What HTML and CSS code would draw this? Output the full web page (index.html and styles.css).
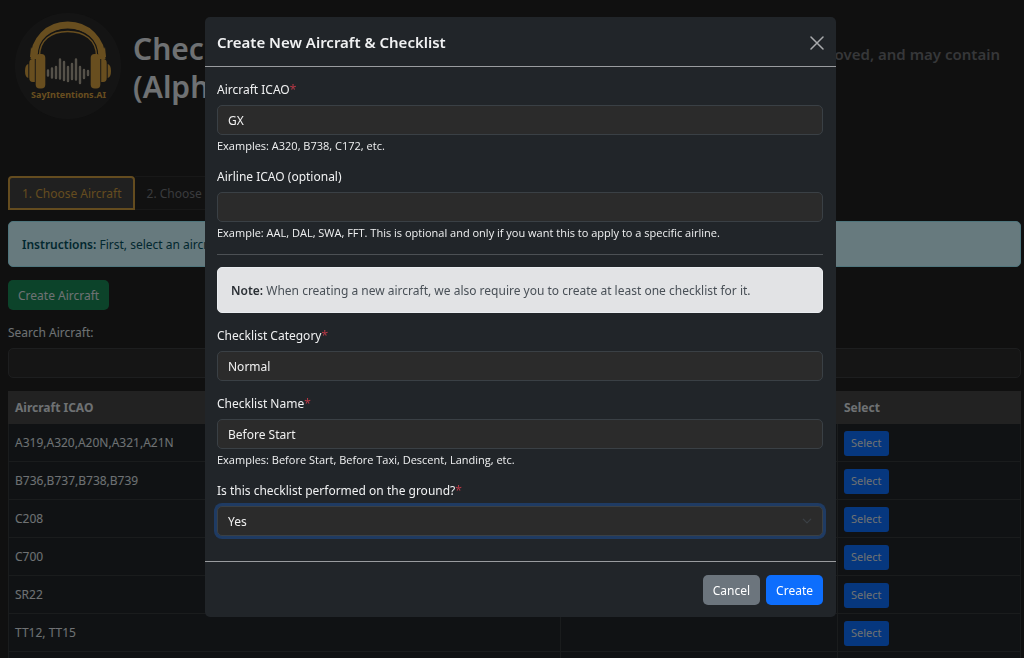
FILE: index.html
```html
<!DOCTYPE html>
<html lang="en">
<head>
<meta charset="utf-8">
<title>Checklist Editor</title>
<link rel="stylesheet" href="styles.css">
</head>
<body>
<div class="page">
  <header class="masthead">
    <svg class="logo" viewBox="0 0 106 106" role="img" aria-label="SayIntentions.AI">
      <circle cx="53" cy="53" r="53" fill="#292929"/>
      <path d="M19 46C19 27 33 12 52.700 12S87 27 87 46" fill="none" stroke="#d09c3e" stroke-width="7"/>
      <path d="M24.500 43C24.500 27 36 17.800 52.700 17.800S81.500 27 81.500 43" fill="none" stroke="#292929" stroke-width="3.500"/>
      <path d="M24.500 43C24.500 27 36 18.500 52.700 18.500S81.500 27 81.500 43" fill="none" stroke="#d09c3e" stroke-width="1.500"/>
      <g fill="#d09c3e">
        <path d="M16 34l-1 10h6zM90 34l1 10h-6z"/>
        <rect x="20.700" y="41" width="9.600" height="34.500" rx="4"/>
        <rect x="75.700" y="41" width="9.600" height="34.500" rx="4"/>
        <path d="M19.800 46h-2q-3.500 0-3.500 4v15q0 4 3.500 4h2zM86.200 46h2q3.500 0 3.500 4v15q0 4-3.500 4h-2z"/>
        <path d="M13.300 51q-3.300 1-3.300 7t3.300 7zM92.700 51q3.300 1 3.300 7t-3.300 7z"/>
      </g>
      <path d="M33 57.500v5M37 55.500v9M41 54v11M45 46.500v19M49 49v18M53 54v14M57 51v15M61 46.500v20M65 54v16M69 57v8M73 58v4" stroke="#aaa292" stroke-width="2.400" stroke-linecap="round"/>
      <text x="53.500" y="85" text-anchor="middle" class="logo-text">SayIntentions.AI</text>
    </svg>
    <h1 class="page-title">Checklist Editor<br>(Alpha)</h1>
    <p class="disclaimer">Checklists are unofficial, are not approved, and may contain<br>errors.</p>
  </header>

  <nav class="steps">
    <button class="step step-active" type="button">1. Choose Aircraft</button>
    <button class="step" type="button">2. Choose Checklist</button>
  </nav>

  <div class="alert alert-info"><strong>Instructions:</strong> First, select an aircraft from the list below.</div>

  <button class="btn btn-success" type="button">Create Aircraft</button>

  <div class="search">
    <label class="label" for="search">Search Aircraft:</label>
    <input class="control search-input" id="search" type="text">
  </div>

  <table class="aircraft">
    <colgroup><col class="col-icao"><col class="col-airline"><col class="col-select"></colgroup>
    <thead><tr><th>Aircraft ICAO</th><th>Airline</th><th>Select</th></tr></thead>
    <tbody>
      <tr><td>A319,A320,A20N,A321,A21N</td><td></td><td><button class="btn-select" type="button">Select</button></td></tr>
      <tr><td>B736,B737,B738,B739</td><td></td><td><button class="btn-select" type="button">Select</button></td></tr>
      <tr><td>C208</td><td></td><td><button class="btn-select" type="button">Select</button></td></tr>
      <tr><td>C700</td><td></td><td><button class="btn-select" type="button">Select</button></td></tr>
      <tr><td>SR22</td><td></td><td><button class="btn-select" type="button">Select</button></td></tr>
      <tr><td>TT12, TT15</td><td></td><td><button class="btn-select" type="button">Select</button></td></tr>
      <tr><td></td><td></td><td></td></tr>
    </tbody>
  </table>
</div>

<div class="backdrop">
  <form class="modal" role="dialog" aria-labelledby="modal-title">
    <div class="modal-header">
      <h2 class="modal-title" id="modal-title">Create New Aircraft &amp; Checklist</h2>
      <button class="close" type="button" aria-label="Close">
        <svg viewBox="0 0 14 14" width="14" height="14"><path d="M1 1l12 12M13 1L1 13" stroke="#a9abad" stroke-width="1.500" stroke-linecap="round"/></svg>
      </button>
    </div>
    <div class="modal-body">
      <div class="field">
        <label class="label" for="icao">Aircraft ICAO<span class="required">*</span></label>
        <input class="control" id="icao" type="text" value="GX">
        <small class="help">Examples: A320, B738, C172, etc.</small>
      </div>
      <div class="field">
        <label class="label" for="airline">Airline ICAO (optional)</label>
        <input class="control" id="airline" type="text">
        <small class="help">Example: AAL, DAL, SWA, FFT. This is optional and only if you want this to apply to a specific airline.</small>
      </div>
      <hr class="divider">
      <div class="alert alert-light"><strong>Note:</strong> When creating a new aircraft, we also require you to create at least one checklist for it.</div>
      <div class="field">
        <label class="label" for="category">Checklist Category<span class="required">*</span></label>
        <input class="control" id="category" type="text" value="Normal">
      </div>
      <div class="field">
        <label class="label" for="name">Checklist Name<span class="required">*</span></label>
        <input class="control" id="name" type="text" value="Before Start">
        <small class="help">Examples: Before Start, Before Taxi, Descent, Landing, etc.</small>
      </div>
      <div class="field">
        <label class="label" for="ground">Is this checklist performed on the ground?<span class="required">*</span></label>
        <div class="select-wrap">
          <select class="control control-focus" id="ground"><option>Yes</option><option>No</option></select>
          <svg class="chevron" viewBox="0 0 16 16" width="10" height="10"><path d="M2 5l6 6 6-6" fill="none" stroke="#3b4045" stroke-width="2" stroke-linecap="round" stroke-linejoin="round"/></svg>
        </div>
      </div>
    </div>
    <div class="modal-footer">
      <button class="btn btn-secondary" type="button">Cancel</button>
      <button class="btn btn-primary" type="button">Create</button>
    </div>
  </form>
</div>
</body>
</html>
```

FILE: styles.css
```css
* {
  box-sizing: border-box;
}

html,
body {
  height: 100%;
  overflow: hidden;
}

body {
  margin: 0;
  background: #202020;
  color: #dee2e6;
  font-family: "Noto Sans", "Open Sans", sans-serif;
  font-size: 12px;
  line-height: 20px;
}

button,
input,
select {
  font: inherit;
}

.page {
  padding: 13px 3px 0 8px;
}

.masthead {
  display: flex;
  align-items: flex-start;
  gap: 12px;
  padding: 0 21px 57px 7px;
}

.logo {
  flex: none;
  width: 106px;
  height: 106px;
}

.logo-text {
  fill: #d09c3e;
  font-size: 9px;
  font-weight: 700;
}

.page-title {
  margin: 17px 0 0;
  font-size: 30px;
  font-weight: 600;
  line-height: 38px;
  white-space: nowrap;
}

.disclaimer {
  margin: 31px 0 0 auto;
  color: #6c6e72;
  font-size: 15px;
  font-weight: 600;
  line-height: 20px;
  white-space: nowrap;
}

.steps {
  display: flex;
}

.step {
  height: 34px;
  padding: 2px 12px 0;
  border: 1px solid #303030;
  border-left: 0;
  background: #222;
  color: #74767a;
}

.step-active {
  padding: 2px 11px 0 12px;
  border: 2px solid #c9983e;
  border-radius: 4px 4px 0 0;
  background: #404040;
  color: #c9983e;
}

.alert {
  padding: 13px 13px 11px;
  border: 1px solid;
  border-radius: 5px;
}

.alert strong {
  font-weight: 600;
}

.alert-info {
  margin: 11px 0 13px;
  border-color: #9eeaf9;
  background: #cff4fc;
  color: #055160;
}

.alert-light {
  margin-bottom: 13px;
  border-color: #e9ecef;
  background: #e2e3e5;
  color: #495057;
}

.alert-light strong {
  color: #2b3035;
}

.btn {
  height: 30px;
  padding: 2px 10px 0;
  border: 0;
  border-radius: 5px;
  color: #fff;
}

.btn-success {
  background: #198754;
  color: #dee2e6;
}

.btn-secondary {
  background: #6c757d;
}

.btn-primary {
  background: #0d6efd;
}

.search {
  margin: 13px 0;
}

.label {
  display: block;
  margin-bottom: 5px;
}

.control {
  display: block;
  width: 100%;
  height: 30px;
  padding: 0 10px;
  border: 1px solid #3a4045;
  border-radius: 5px;
  outline: 0;
  background: #2b2b2b;
  color: #f1f1f1;
  appearance: none;
}

.search-input {
  border-color: #3a3c3e;
}

.aircraft {
  width: 100%;
  border-collapse: collapse;
  table-layout: fixed;
}

.col-airline {
  width: 277px;
}

.col-select {
  width: 183px;
}

.aircraft th,
.aircraft td {
  height: 38px;
  padding: 1px 7px 0 6px;
  border: 1px solid #34383b;
  background: #212529;
  text-align: left;
}

.aircraft th {
  height: 32px;
  border-color: #444;
  background: #444;
  font-weight: 700;
}

.btn-select {
  display: block;
  height: 25px;
  padding: 0 7px;
  border: 0;
  border-radius: 3px;
  background: #0d6efd;
  color: #dee2e6;
  font-size: 11px;
}

.backdrop {
  position: fixed;
  inset: 0;
  padding: 17px 0 0 17px;
  background: rgba(0, 0, 0, 0.5);
}

.modal {
  max-width: 631px;
  margin: 0 auto;
  border-radius: 5px;
  background: #212529;
  color: #f0f1f2;
}

.modal-header {
  display: flex;
  align-items: center;
  justify-content: space-between;
  padding: 13px 12px 11px;
  border-bottom: 1px solid #9a9c9f;
}

.modal-title {
  margin: 0;
  font-size: 15px;
  font-weight: 600;
  line-height: 25px;
}

.close {
  display: flex;
  padding: 0;
  border: 0;
  background: none;
}

.modal-body {
  padding: 13px 13px 12px 12px;
}

.field {
  margin-bottom: 13px;
}

.required {
  color: #b83845;
}

.help {
  display: block;
  margin-top: 3px;
  font-family: "Open Sans", "Noto Sans", sans-serif;
  font-size: 11px;
  line-height: 16px;
}

.divider {
  height: 1px;
  margin: 0 0 12px;
  border: 0;
  background: #4c5054;
}

.select-wrap {
  position: relative;
}

.control-focus {
  padding-top: 1px;
  box-shadow: 0 0 0 3px #1f3b63;
}

.chevron {
  position: absolute;
  top: 10px;
  right: 11px;
  pointer-events: none;
}

.modal-footer {
  display: flex;
  justify-content: flex-end;
  gap: 6px;
  padding: 13px 13px 12px;
  border-top: 1px solid #9a9c9f;
}
```
